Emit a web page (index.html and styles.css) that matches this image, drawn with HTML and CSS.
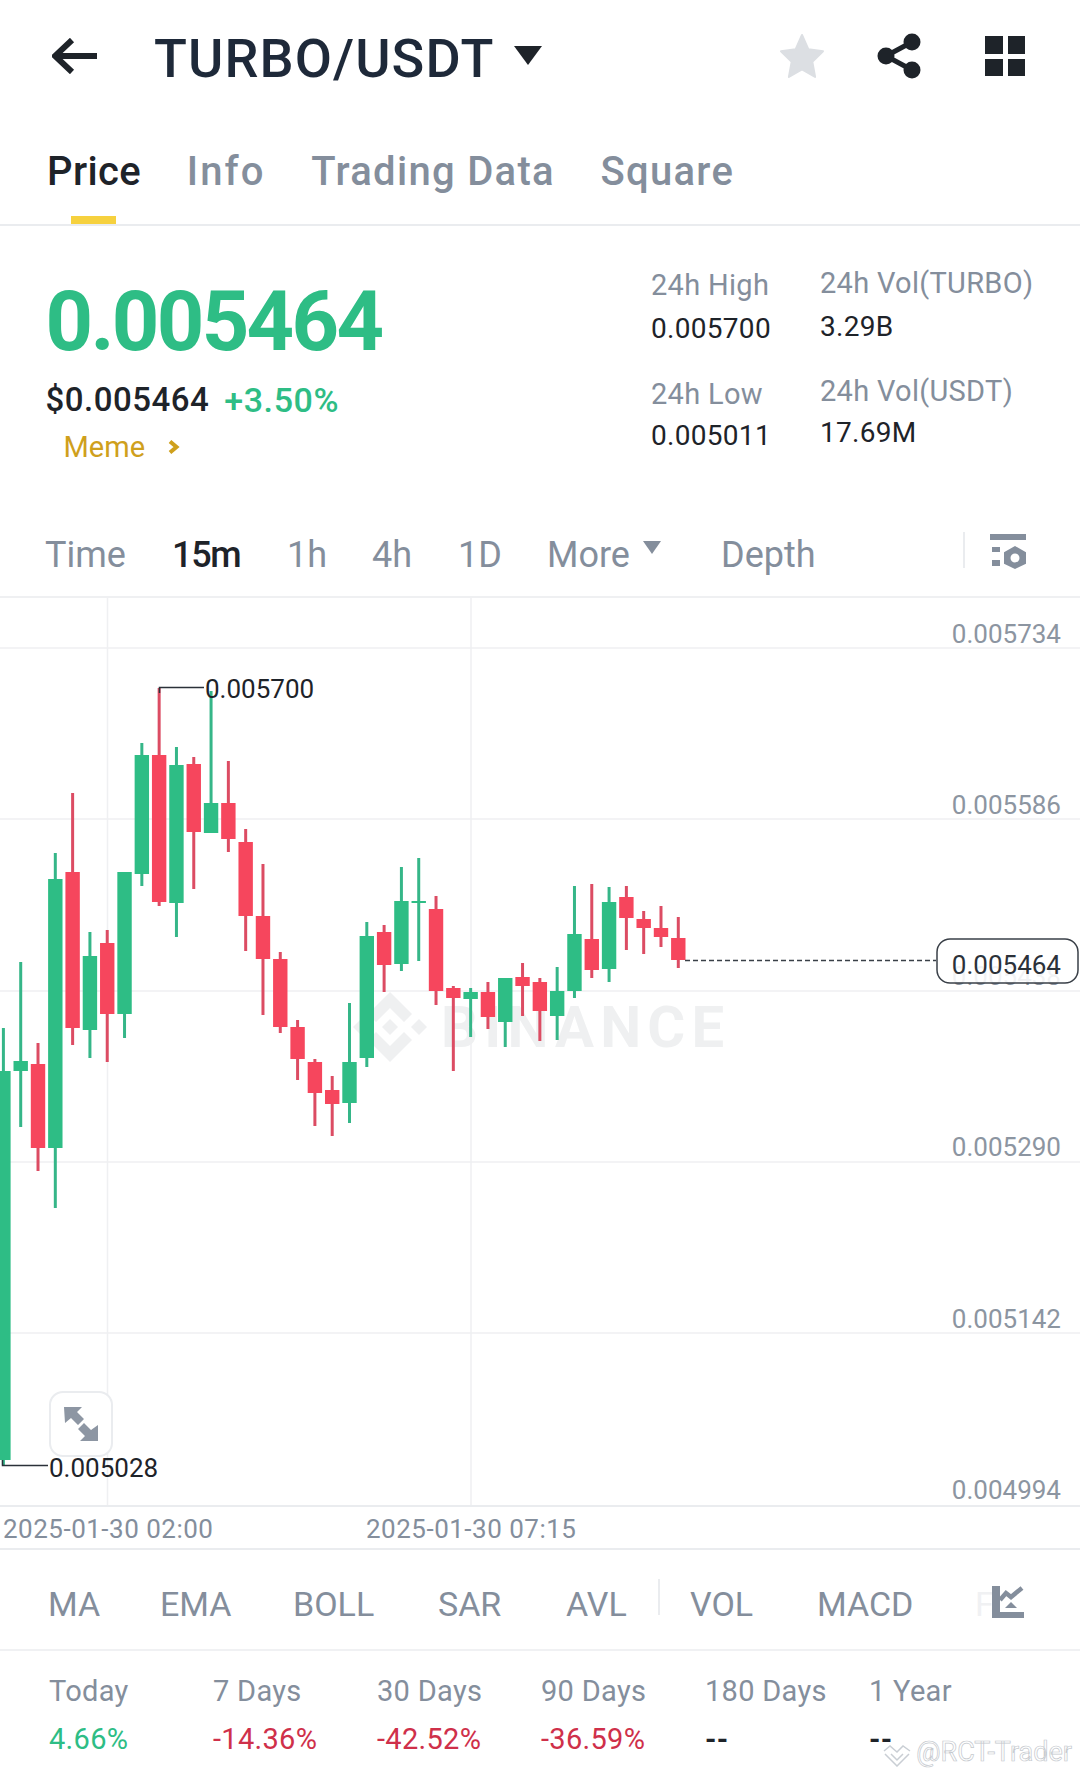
FILE: index.html
```html
<!DOCTYPE html>
<html lang="en">
<head>
    <meta charset="UTF-8">
    <meta name="viewport" content="width=device-width, initial-scale=1.0">
    <title>TURBO/USDT</title>
    <link rel="stylesheet" href="styles.css">
</head>
<body>

    <header class="topbar">
        <svg class="back-icon" viewBox="0 0 46 36"><path d="M45 18H4M20 2 3 18l17 16" /></svg>
        <h1 class="pair">TURBO/USDT</h1>
        <span class="pair-caret"></span>
        <svg class="star-icon" viewBox="0 0 46 46"><path d="M23 2l6.4 14.3 14.6 1.9-10.7 10.6 2.8 15.2L23 36.4 9.9 44l2.8-15.2L2 18.2l14.6-1.9z" /></svg>
        <svg class="share-icon" viewBox="0 0 44 46">
            <path d="M35 9 9 23l26 14" />
            <circle cx="35" cy="9" r="8.5" />
            <circle cx="9" cy="23" r="8.5" />
            <circle cx="35" cy="37" r="8.5" />
        </svg>
        <div class="grid-icon"><i></i><i></i><i></i><i></i></div>
    </header>

    <nav class="tabs">
        <a class="tab active">Price</a>
        <a class="tab tab-info">Info</a>
        <a class="tab">Trading Data</a>
        <a class="tab">Square</a>
    </nav>

    <section class="summary">
        <div class="summary-left">
            <div class="last-price">0.005464</div>
            <div class="fiat-row">
                <span class="fiat">$0.005464</span>
                <span class="change">+3.50%</span>
            </div>
            <div class="tag-row">
                <span>Meme</span>
                <svg class="tag-arrow" viewBox="0 0 12 14"><path d="M2 1.5 8.5 7 2 12.5" /></svg>
            </div>
        </div>
        <div class="stats">
            <div class="stat-col">
                <div class="stat-label">24h High</div>
                <div class="stat-value">0.005700</div>
                <div class="stat-label second">24h Low</div>
                <div class="stat-value">0.005011</div>
            </div>
            <div class="stat-col raised">
                <div class="stat-label">24h Vol(TURBO)</div>
                <div class="stat-value">3.29B</div>
                <div class="stat-label second">24h Vol(USDT)</div>
                <div class="stat-value">17.69M</div>
            </div>
        </div>
    </section>

    <div class="intervals">
        <span class="interval w-time">Time</span>
        <span class="interval w-15m current">15m</span>
        <span class="interval w-1h">1h</span>
        <span class="interval w-4h">4h</span>
        <span class="interval w-1d">1D</span>
        <span class="interval w-more">More<b class="more-caret"></b></span>
        <span class="interval">Depth</span>
        <span class="interval-divider"></span>
        <svg class="settings-icon" viewBox="0 0 36 36">
            <path d="M0 1h36v6H0zM2 14h8v5H2zM2 27h8v6H2z" />
            <path fill-rule="evenodd" d="M25 13l11 6.200v11.600L25 36l-11-5.200V19.200zM25 20.500a4.500 4.500 0 1 0 0 9 4.500 4.500 0 0 0 0-9z" />
        </svg>
    </div>

    <div class="chart">
        <svg class="chart-canvas" id="chartCanvas" viewBox="0 598 1080 907">
            <g class="grid-lines">
                <path d="M0 648H1080M0 819H1080M0 991H1080M0 1162H1080M0 1333H1080M107.500 598V1505M471 598V1505" />
            </g>
            <g class="watermark">
                <path d="M390 992l22 22-8 8-14-14-14 14-8-8zM390 1062l22-22-8-8-14 14-14-14-8 8zM390 1019l8 8-8 8-8-8zM361 1019l8 8-8 8-8-8zM419 1019l8 8-8 8-8-8z" />
                <text x="441" y="1047">BINANCE</text>
            </g>
            <g id="candles"></g>
            <g class="axis-labels">
                <text x="1061" y="643">0.005734</text>
                <text x="1061" y="814">0.005586</text>
                <text x="1061" y="985">0.005438</text>
                <text x="1061" y="1156">0.005290</text>
                <text x="1061" y="1328">0.005142</text>
                <text x="1061" y="1499">0.004994</text>
            </g>
            <g class="extreme">
                <path d="M159.500 693V687.500H204M2.500 1460V1465.500H48" />
                <text x="205" y="698">0.005700</text>
                <text x="49" y="1477">0.005028</text>
            </g>
            <path class="price-line" d="M685 960.500H936" />
            <rect class="price-pill" x="937" y="939" width="141" height="44" rx="13" />
            <text class="price-pill-text" x="1061" y="974">0.005464</text>
        </svg>
        <button class="expand-btn">
            <svg viewBox="0 0 36 36"><path d="M1 1h18l-5 5 7 7-6 6-7-7-6 5zM35 35H17l5-5-7-7 6-6 7 7 7-5z" /></svg>
        </button>
    </div>

    <div class="date-axis">
        <span class="date first">2025-01-30 02:00</span>
        <span class="date">2025-01-30 07:15</span>
    </div>

    <div class="indicators">
        <span class="indicator w-ma">MA</span>
        <span class="indicator w-ema">EMA</span>
        <span class="indicator w-boll">BOLL</span>
        <span class="indicator w-sar">SAR</span>
        <span class="indicator w-avl">AVL</span>
        <span class="indicator-divider"></span>
        <span class="indicator w-vol">VOL</span>
        <span class="indicator w-macd">MACD</span>
        <span class="indicator faded">F</span>
        <svg class="indicator-icon" viewBox="0 0 32 32">
            <path d="M0 0h8v26h24v6H0z" />
            <path class="zig" d="M8 14l6-7 5 4 11-9" />
            <path d="M19 16l6 6H13z" />
        </svg>
    </div>

    <div class="periods">
        <div class="period"><span class="period-name">Today</span><span class="period-value up">4.66%</span></div>
        <div class="period"><span class="period-name">7 Days</span><span class="period-value down">-14.36%</span></div>
        <div class="period"><span class="period-name">30 Days</span><span class="period-value down">-42.52%</span></div>
        <div class="period"><span class="period-name">90 Days</span><span class="period-value down">-36.59%</span></div>
        <div class="period"><span class="period-name">180 Days</span><span class="period-value none">--</span></div>
        <div class="period"><span class="period-name">1 Year</span><span class="period-value none">--</span></div>
    </div>

    <div class="post-mark">
        <svg viewBox="0 0 28 24"><path d="M1 8l6-5 7 6 6-6 7 5M2 11l12 12 12-12M8 11l6 6 6-6" /></svg>
        <span>@RCT-Trader</span>
    </div>

    <script>
        // x of the first wick and the distance between candles
        const startX = 3.4;
        const step = 17.305;

        // [wick top, body top, body bottom, wick bottom, 1 = green]
        const candles = [
            [1028, 1071, 1460, 1465, 1],
            [962, 1061, 1071, 1127, 1],
            [1043, 1064, 1148, 1171, 0],
            [853, 879, 1148, 1208, 1],
            [793, 872, 1028, 1045, 0],
            [932, 956, 1030, 1058, 1],
            [930, 943, 1014, 1062, 0],
            [872, 872, 1014, 1038, 1],
            [743, 755, 874, 886, 1],
            [688, 755, 902, 906, 0],
            [747, 765, 903, 937, 1],
            [757, 764, 832, 889, 0],
            [691, 803, 833, 833, 1],
            [761, 803, 839, 852, 0],
            [829, 842, 916, 951, 0],
            [864, 916, 959, 1015, 0],
            [952, 959, 1027, 1033, 0],
            [1020, 1027, 1059, 1080, 0],
            [1059, 1062, 1093, 1126, 0],
            [1076, 1090, 1104, 1136, 0],
            [1003, 1062, 1103, 1123, 1],
            [922, 936, 1058, 1067, 1],
            [925, 932, 965, 992, 0],
            [867, 901, 964, 971, 1],
            [858, 901, 903, 961, 1],
            [896, 909, 991, 1005, 0],
            [986, 988, 998, 1071, 0],
            [988, 992, 999, 1037, 1],
            [982, 992, 1017, 1029, 0],
            [978, 978, 1022, 1047, 1],
            [963, 977, 986, 1016, 0],
            [978, 982, 1011, 1041, 0],
            [967, 991, 1016, 1040, 1],
            [886, 934, 991, 998, 1],
            [884, 939, 970, 978, 0],
            [887, 902, 969, 982, 1],
            [886, 897, 918, 950, 0],
            [911, 919, 928, 954, 0],
            [906, 928, 937, 947, 0],
            [917, 938, 960, 968, 0]
        ];

        const candleGroup = document.getElementById("candles");

        // Function to draw every candle into the chart
        function renderCandles() {
            let markup = "";
            candles.forEach((c, i) => {
                const x = startX + step * i;
                const colour = c[4] ? "up" : "down";
                markup += `<path class="wick ${colour}" d="M${x} ${c[0]}V${c[3]}"/>`;
                markup += `<rect class="body ${colour}" x="${x - 7.2}" y="${c[1]}" width="14.4" height="${c[2] - c[1]}"/>`;
            });
            candleGroup.innerHTML = markup;
        }

        renderCandles();
    </script>

</body>
</html>
```

FILE: styles.css
```css
* {
    box-sizing: border-box;
}

html, body {
    margin: 0;
    padding: 0;
}

body {
    position: relative;
    width: 1080px;
    height: 1774px;
    overflow: hidden;
    background: #fff;
    font-family: Roboto, "Noto Sans", sans-serif;
    color: #1e2329;
}

/* top bar */
.topbar {
    display: flex;
    align-items: center;
    height: 112px;
    padding-left: 52px;
}

.back-icon {
    width: 46px;
    height: 36px;
    fill: none;
    stroke: #1e2329;
    stroke-width: 6;
}

.pair {
    margin: 5px 0 0 56px;
    font-size: 54px;
    font-weight: 500;
    line-height: 60px;
    letter-spacing: 1.100px;
    color: #1e2939;
}

.pair-caret {
    width: 0;
    height: 0;
    margin: -2px 0 0 19px;
    border-left: 14px solid transparent;
    border-right: 14px solid transparent;
    border-top: 19px solid #1e2329;
}

.star-icon {
    width: 46px;
    height: 46px;
    margin-left: auto;
    fill: #dcdfe3;
    stroke: #dcdfe3;
    stroke-width: 2;
    stroke-linejoin: round;
}

.share-icon {
    width: 44px;
    height: 46px;
    margin-left: 52px;
    fill: #1e2329;
    stroke: #1e2329;
}

.share-icon path {
    fill: none;
    stroke-width: 5;
}

.share-icon circle {
    stroke: none;
}

.grid-icon {
    display: grid;
    grid-template-columns: 17.500px 17.500px;
    grid-auto-rows: 17.500px;
    gap: 5px;
    margin: 0 55px 0 64px;
}

.grid-icon i {
    background: #1e2329;
}

/* tabs */
.tabs {
    display: flex;
    gap: 45.500px;
    height: 114px;
    padding: 35px 0 0 47px;
    border-bottom: 2px solid #eaecef;
}

.tab {
    position: relative;
    height: 77px;
    font-size: 40px;
    font-weight: 500;
    line-height: 50px;
    letter-spacing: 1.300px;
    color: #848e9c;
}

.tab-info {
    letter-spacing: 2.150px;
}

.tab.active {
    letter-spacing: 0.4px;
    color: #1e2329;
}

.tab.active::after {
    content: "";
    position: absolute;
    left: 24px;
    bottom: 0;
    width: 45px;
    height: 8px;
    background: #f6d13e;
}

/* price summary */
.summary {
    display: flex;
    justify-content: space-between;
    height: 296px;
    padding-left: 45.500px;
}

.summary-left {
    display: flex;
    flex-direction: column;
}

.last-price {
    margin-top: 56px;
    font-size: 83px;
    font-weight: 700;
    line-height: 80px;
    letter-spacing: -2.700px;
    color: #2ebd85;
}

.fiat-row {
    display: flex;
    gap: 15px;
    margin-top: 18px;
    font-size: 33px;
    font-weight: 500;
    line-height: 40px;
}

.fiat {
    letter-spacing: 0.5px;
}

.change {
    font-size: 34px;
    letter-spacing: 0.6px;
    color: #2ebd85;
}

.tag-row {
    display: flex;
    align-items: center;
    margin: 7px 0 0 18px;
    font-size: 29px;
    line-height: 40px;
    color: #cfa01c;
}

.tag-arrow {
    width: 12px;
    height: 14px;
    margin-left: 23px;
    fill: none;
    stroke: #cfa01c;
    stroke-width: 4;
}

.stats {
    display: flex;
    width: 429px;
    padding-top: 41px;
}

.stat-col {
    width: 169px;
}

.stat-col.raised {
    width: 260px;
    margin-top: -2px;
}

.stat-label {
    font-size: 29px;
    line-height: 36px;
    letter-spacing: 0.3px;
    color: #848e9c;
}

.stat-label.second {
    margin-top: 29px;
}

.stat-col.raised .stat-label.second {
    margin-top: 28px;
}

.stat-value {
    margin-top: 8px;
    font-size: 28px;
    line-height: 36px;
    letter-spacing: 0.3px;
    color: #1e2329;
}

.stat-label.second + .stat-value {
    margin-top: 6px;
}

/* interval row */
.intervals {
    display: flex;
    align-items: center;
    height: 76px;
    padding: 0 0 8px 45px;
    border-bottom: 2px solid #eff0f2;
    font-size: 36px;
    color: #848e9c;
}

.interval {
    line-height: 44px;
}

.interval.current {
    font-weight: 500;
    letter-spacing: -1.300px;
    color: #1e2329;
}

.w-time { width: 127px; }
.w-15m { width: 115px; }
.w-1h { width: 85px; }
.w-4h { width: 86px; }
.w-1d { width: 89px; }
.w-more { display: flex; width: 174px; }

.more-caret {
    width: 0;
    height: 0;
    margin: 8px 0 0 13px;
    border-left: 9.500px solid transparent;
    border-right: 9.500px solid transparent;
    border-top: 13px solid #848e9c;
}

.interval-divider {
    width: 2px;
    height: 36px;
    margin: -10px 0 0 147px;
    background: #eaecef;
}

.settings-icon {
    width: 36px;
    height: 36px;
    margin: -8px 0 0 25px;
    fill: #848e9c;
}

/* chart */
.chart {
    position: relative;
    height: 907px;
}

.chart-canvas {
    display: block;
    width: 1080px;
    height: 907px;
}

.grid-lines path {
    fill: none;
    stroke: #eff0f2;
    stroke-width: 1.500;
}

.watermark {
    fill: #eff0f1;
}

.watermark text {
    font-size: 58px;
    font-weight: 700;
    letter-spacing: 6.200px;
}

.wick {
    fill: none;
    stroke-width: 3;
}

.wick.up { stroke: #35b688; }
.wick.down { stroke: #dc4c63; }
.body.up { fill: #2ebd85; }
.body.down { fill: #f6465d; }

.axis-labels text {
    font-size: 26px;
    text-anchor: end;
    fill: #8c95a1;
}

.extreme path {
    fill: none;
    stroke: #2b3139;
    stroke-width: 1.500;
}

.extreme text {
    font-size: 26px;
    fill: #1e2329;
}

.price-line {
    fill: none;
    stroke: #3a4048;
    stroke-width: 1.500;
    stroke-dasharray: 5 3;
}

.price-pill {
    fill: rgba(255, 255, 255, 0.88);
    stroke: #3a4048;
    stroke-width: 1.500;
}

.price-pill-text {
    font-size: 26px;
    text-anchor: end;
    fill: #2b3139;
}

.expand-btn {
    position: absolute;
    left: 49px;
    top: 793px;
    display: flex;
    align-items: center;
    justify-content: center;
    width: 64px;
    height: 66px;
    padding: 0;
    background: #fff;
    border: 2px solid #eaecef;
    border-radius: 14px;
}

.expand-btn svg {
    width: 36px;
    height: 36px;
    fill: #8d96a3;
}

/* date axis */
.date-axis {
    display: flex;
    height: 45px;
    align-items: center;
    padding: 2px 0 0 3px;
    border-top: 2px solid #eaecef;
    border-bottom: 2px solid #eaecef;
    font-size: 26px;
    letter-spacing: 0.5px;
    color: #848e9c;
}

.date.first {
    width: 363px;
}

/* indicators */
.indicators {
    display: flex;
    align-items: center;
    height: 101px;
    padding: 8px 0 0 48px;
    border-bottom: 2px solid #f0f1f3;
    font-size: 34px;
    color: #848e9c;
}

.w-ma { width: 112px; }
.w-ema { width: 133px; }
.w-boll { width: 145px; }
.w-sar { width: 128px; }
.w-avl { width: 92px; }
.w-vol { width: 127px; }
.w-macd { width: 158px; }

.indicator-divider {
    width: 2px;
    height: 36px;
    margin-right: 30px;
    margin-top: -14px;
    background: #eaecef;
}

.indicator.faded {
    width: 17px;
    color: #f0f1f3;
}

.indicator-icon {
    width: 32px;
    height: 32px;
    margin-top: -4px;
    fill: #848e9c;
}

.indicator-icon .zig {
    fill: none;
    stroke: #848e9c;
    stroke-width: 4.500;
}

/* period returns */
.periods {
    display: grid;
    grid-template-columns: repeat(6, 164px);
    padding: 22px 0 0 49px;
}

.period {
    display: flex;
    flex-direction: column;
    gap: 12px;
    font-size: 29px;
    line-height: 36px;
    letter-spacing: 0.3px;
}

.period-name {
    color: #848e9c;
}

.period-value.up { color: #2ebd85; }
.period-value.down { color: #cf304a; }
.period-value.none {
    font-weight: 700;
    color: #1e2329;
}

/* watermark left by the post */
.post-mark {
    position: absolute;
    right: 8px;
    top: 1736px;
    display: flex;
    align-items: center;
    gap: 5px;
    font-size: 27px;
    line-height: 32px;
    color: #fff;
    -webkit-text-stroke: 0.7px #c4c8cd;
}

.post-mark svg {
    width: 28px;
    height: 24px;
    margin-top: 6px;
    fill: none;
    stroke: #c9ced4;
    stroke-width: 1.500;
}
```
